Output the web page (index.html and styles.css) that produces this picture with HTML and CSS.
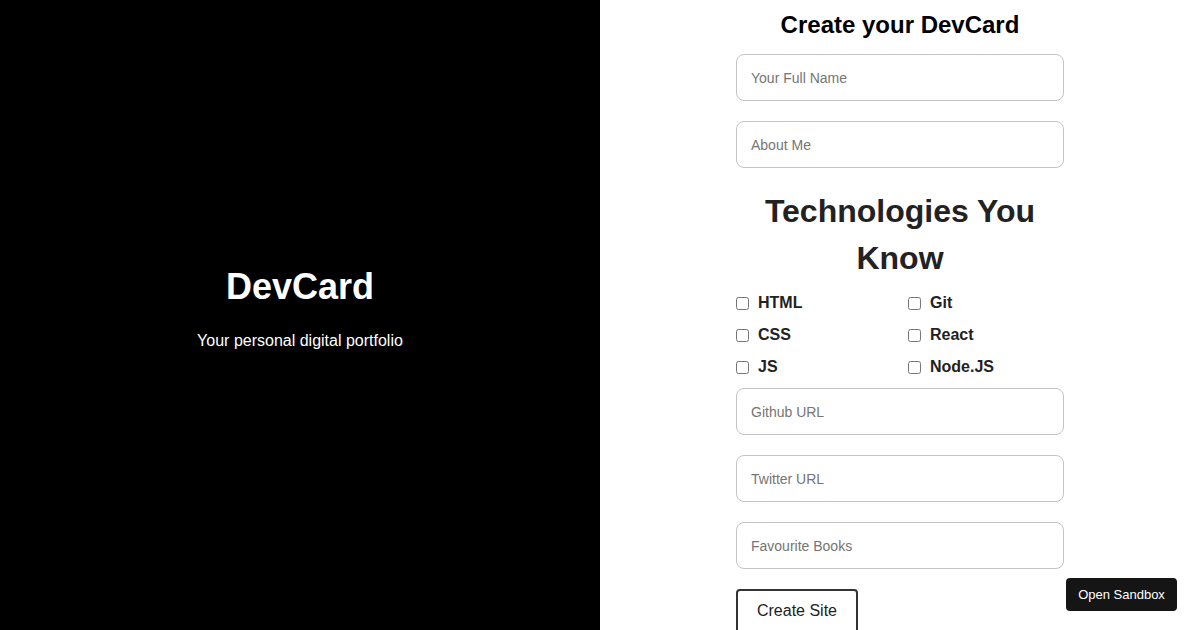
FILE: index.html
```html
<!DOCTYPE html>
<html>
<head>
<meta charset="utf-8">
<link rel="stylesheet" href="styles.css">
</head>
<body>
<div class="page">
  <div class="hero">
    <h1 class="hero-title">DevCard</h1>
    <p class="hero-sub">Your personal digital portfolio</p>
  </div>
  <div class="side">
    <form class="form">
      <h2 class="form-title">Create your DevCard</h2>
      <input class="field" type="text" placeholder="Your Full Name">
      <input class="field" type="text" placeholder="About Me">
      <h2 class="tech-title">Technologies You Know</h2>
      <div class="checks">
        <label class="check"><input type="checkbox"><span>HTML</span></label>
        <label class="check"><input type="checkbox"><span>Git</span></label>
        <label class="check"><input type="checkbox"><span>CSS</span></label>
        <label class="check"><input type="checkbox"><span>React</span></label>
        <label class="check"><input type="checkbox"><span>JS</span></label>
        <label class="check"><input type="checkbox"><span>Node.JS</span></label>
      </div>
      <input class="field" type="text" placeholder="Github URL">
      <input class="field" type="text" placeholder="Twitter URL">
      <input class="field" type="text" placeholder="Favourite Books">
      <button class="submit" type="button">Create Site</button>
    </form>
  </div>
</div>
<button class="sandbox" type="button">Open Sandbox</button>
</body>
</html>
```
FILE: styles.css
```css
html, body {
  margin: 0;
  padding: 0;
  font-family: "Liberation Sans", Arial, sans-serif;
  background: #fff;
}
.page {
  display: flex;
  width: 100%;
}
.hero {
  box-sizing: border-box;
  width: 50%;
  height: 630px;
  padding-bottom: 13px;
  background: #000;
  color: #fff;
  display: flex;
  flex-direction: column;
  align-items: center;
  justify-content: center;
  position: sticky;
  top: 0;
}
.hero-title {
  margin: 0 0 25px;
  font-size: 36px;
  line-height: 40px;
  font-weight: bold;
}
.hero-sub {
  margin: 0;
  font-size: 16px;
  line-height: 18px;
}
.side {
  width: 50%;
  display: flex;
  justify-content: center;
}
.form {
  width: 328px;
  display: flex;
  flex-direction: column;
  padding-top: 11px;
}
.form-title {
  margin: 0 0 15px;
  text-align: center;
  font-size: 24px;
  line-height: 28px;
  color: #000;
}
.field {
  box-sizing: border-box;
  width: 328px;
  height: 47px;
  margin: 0 0 20px;
  padding: 0 14px;
  border: 1px solid #c4c4c4;
  border-radius: 8px;
  font-family: "Liberation Sans", Arial, sans-serif;
  font-size: 14px;
  color: #222;
  background: #fff;
  outline: none;
}
.field::placeholder {
  color: #757575;
}
.tech-title {
  margin: 0 0 5px;
  text-align: center;
  font-size: 32px;
  line-height: 47px;
  color: #222;
}
.checks {
  display: grid;
  grid-template-columns: 172px 156px;
  margin-bottom: 5px;
}
.check {
  display: flex;
  align-items: center;
  height: 32px;
  font-size: 16px;
  font-weight: bold;
  color: #222;
}
.check input {
  margin: 0 9px 0 0;
  width: 13px;
  height: 13px;
}
.submit {
  align-self: flex-start;
  width: 122px;
  height: 50px;
  margin: 0;
  border: 2px solid #333;
  border-radius: 4px;
  background: #fff;
  font-family: "Liberation Sans", Arial, sans-serif;
  font-size: 16px;
  color: #222;
  padding: 0 0 6px;
  box-sizing: border-box;
}
.sandbox {
  position: fixed;
  right: 23px;
  bottom: 19px;
  width: 111px;
  height: 33px;
  border: none;
  border-radius: 4px;
  background: #151515;
  color: #fff;
  font-family: "Liberation Sans", Arial, sans-serif;
  font-size: 13px;
  padding: 0;
}
```
